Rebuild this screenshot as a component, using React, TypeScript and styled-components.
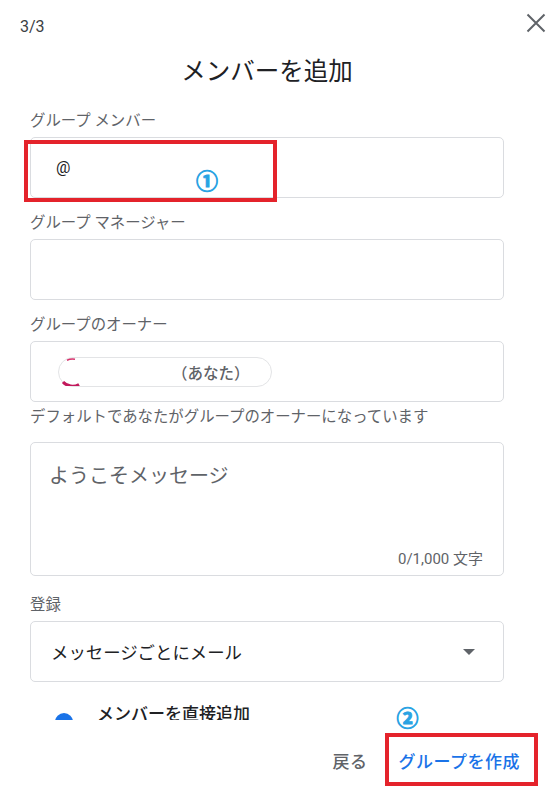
import React from "react";
import styled, { createGlobalStyle } from "styled-components";

const GlobalStyle = createGlobalStyle`
  html, body {
    margin: 0;
    padding: 0;
    background: #ffffff;
  }
  body {
    font-family: Roboto, "Noto Sans CJK JP", "Noto Sans", sans-serif;
    color: #202124;
  }
`;

const Dialog = styled.div`
  position: relative;
  width: 556px;
  height: 789px;
  display: flex;
  flex-direction: column;
  overflow: hidden;
  background: #fff;
`;

const Header = styled.div`
  display: flex;
  justify-content: space-between;
  align-items: center;
  height: 28px;
  padding: 12px 8px 0 20px;
`;

const Step = styled.span`
  font-size: 16px;
  color: #3c4043;
`;

const CloseButton = styled.button`
  width: 24px;
  height: 24px;
  margin-top: -6px;
  padding: 0;
  border: none;
  background: none;
  display: flex;
  align-items: center;
  justify-content: center;
  cursor: pointer;
`;

const Title = styled.h1`
  margin: 17px 52px 0 30px;
  height: 30px;
  line-height: 30px;
  text-align: center;
  font-size: 24.5px;
  font-weight: 400;
  color: #202124;
`;

const Body = styled.div`
  flex: 1;
  overflow: hidden;
  padding: 24px 52px 0 30px;
`;

const Field = styled.div<{ $gap?: number }>`
  margin-bottom: ${(p) => p.$gap ?? 15}px;
`;

const Label = styled.div`
  font-size: 15.4px;
  line-height: 20px;
  color: #5f6368;
  margin-bottom: 6px;
`;

const InputBox = styled.div`
  position: relative;
  height: 61px;
  box-sizing: border-box;
  border: 1px solid #dadce0;
  border-radius: 5px;
  display: flex;
  align-items: center;
  padding: 0 25px;
  font-size: 16px;
  color: #202124;
`;

const Helper = styled.div`
  margin-top: 5px;
  font-size: 15.4px;
  line-height: 20px;
  color: #5f6368;
`;

const MessageBox = styled.div`
  height: 134px;
  box-sizing: border-box;
  border: 1px solid #dadce0;
  border-radius: 5px;
  padding: 19px 20px 6px 18px;
  display: flex;
  flex-direction: column;
  justify-content: space-between;
`;

const Placeholder = styled.div`
  font-size: 20px;
  line-height: 28px;
  color: #5f6368;
`;

const Counter = styled.div`
  align-self: flex-end;
  font-size: 15px;
  line-height: 20px;
  color: #5f6368;
`;

const Select = styled.div`
  height: 61px;
  box-sizing: border-box;
  border: 1px solid #dadce0;
  border-radius: 5px;
  display: flex;
  align-items: center;
  justify-content: space-between;
  padding: 0 28px 0 20px;
  font-size: 17.4px;
  color: #202124;
`;

const Caret = styled.span`
  width: 0;
  height: 0;
  border-left: 6px solid transparent;
  border-right: 6px solid transparent;
  border-top: 6px solid #5f6368;
`;

const Chip = styled.div`
  height: 30px;
  box-sizing: border-box;
  border: 1px solid #e3e4e6;
  border-radius: 15px;
  display: flex;
  align-items: center;
  padding: 0 21px 0 0;
  margin-left: 2px;
`;

const Avatar = styled.span`
  width: 28px;
  height: 28px;
  display: flex;
`;

const NameGap = styled.span`
  width: 85px;
`;

const ChipText = styled.span`
  font-size: 15.5px;
  font-weight: 500;
  color: #5f6368;
`;

const OptionRow = styled.div`
  display: flex;
  align-items: flex-start;
  padding-left: 25px;
  gap: 24px;
`;

const OptionDot = styled.span`
  width: 18px;
  height: 18px;
  margin-top: 11px;
  border-radius: 50%;
  background: #1a73e8;
  flex-shrink: 0;
`;

const OptionText = styled.div`
  font-size: 17px;
  line-height: 24px;
  font-weight: 500;
  color: #202124;
`;

const Footer = styled.div`
  height: 69px;
  box-sizing: border-box;
  padding: 11px 28px 0 0;
  display: flex;
  justify-content: flex-end;
  align-items: center;
  gap: 15px;
`;

const TextButton = styled.button<{ $primary?: boolean }>`
  position: relative;
  height: 36px;
  padding: 0 8px;
  border: none;
  background: none;
  font-family: inherit;
  font-size: 17px;
  font-weight: 500;
  letter-spacing: 0.5px;
  color: ${(p) => (p.$primary ? "#1a73e8" : "#5f6368")};
  cursor: pointer;
`;

/* annotation overlays drawn on top of the screenshot */
const Highlight = styled.span<{ $top: number; $left: number; $w: number; $h: number }>`
  position: absolute;
  top: ${(p) => p.$top}px;
  left: ${(p) => p.$left}px;
  width: ${(p) => p.$w}px;
  height: ${(p) => p.$h}px;
  box-sizing: border-box;
  border: 4px solid #e4232b;
  pointer-events: none;
`;

const Marker = styled.span<{ $top: number; $left: number }>`
  position: absolute;
  top: ${(p) => p.$top}px;
  left: ${(p) => p.$left}px;
  font-family: "Noto Sans CJK JP", sans-serif;
  font-size: 22px;
  line-height: 22px;
  font-weight: 700;
  color: #2aa3e3;
  -webkit-text-stroke: 0.9px #2aa3e3;
  letter-spacing: 0;
`;

const CloseIcon = () => (
  <svg width="20" height="20" viewBox="0 0 20 20">
    <path d="M1.5 1.5 18.5 18.5M18.5 1.5 1.5 18.5" stroke="#5f6368" strokeWidth="2" fill="none" />
  </svg>
);

const AvatarArcs = () => (
  <svg width="28" height="28" viewBox="0 0 28 28">
    <path d="M8 2.2 A13 13 0 0 1 16 1.2" stroke="#d6336c" strokeWidth="1.5" fill="none" />
    <path d="M4 24 A13 13 0 0 0 20 26.5" stroke="#c2185b" strokeWidth="3" fill="none" />
  </svg>
);

export default function App() {
  return (
    <>
      <GlobalStyle />
      <Dialog>
        <Header>
          <Step>3/3</Step>
          <CloseButton aria-label="閉じる">
            <CloseIcon />
          </CloseButton>
        </Header>
        <Title>メンバーを追加</Title>

        <Body>
          <Field>
            <Label>グループ メンバー</Label>
            <InputBox>
              @
              <Highlight $top={2} $left={-7} $w={253} $h={62} />
              <Marker $top={30} $left={165}>①</Marker>
            </InputBox>
          </Field>

          <Field>
            <Label>グループ マネージャー</Label>
            <InputBox />
          </Field>

          <Field $gap={15}>
            <Label>グループのオーナー</Label>
            <InputBox>
              <Chip>
                <Avatar>
                  <AvatarArcs />
                </Avatar>
                <NameGap />
                <ChipText>（あなた）</ChipText>
              </Chip>
            </InputBox>
            <Helper>デフォルトであなたがグループのオーナーになっています</Helper>
          </Field>

          <Field $gap={19}>
            <MessageBox>
              <Placeholder>ようこそメッセージ</Placeholder>
              <Counter>0/1,000 文字</Counter>
            </MessageBox>
          </Field>

          <Field $gap={20}>
            <Label>登録</Label>
            <Select>
              メッセージごとにメール
              <Caret />
            </Select>
          </Field>

          <OptionRow>
            <OptionDot />
            <OptionText>メンバーを直接追加</OptionText>
          </OptionRow>
        </Body>

        <Footer>
          <TextButton>戻る</TextButton>
          <TextButton $primary>
            グループを作成
            <Highlight $top={-9} $left={-6} $w={153} $h={53} />
            <Marker $top={-37} $left={6}>②</Marker>
          </TextButton>
        </Footer>
      </Dialog>
    </>
  );
}
